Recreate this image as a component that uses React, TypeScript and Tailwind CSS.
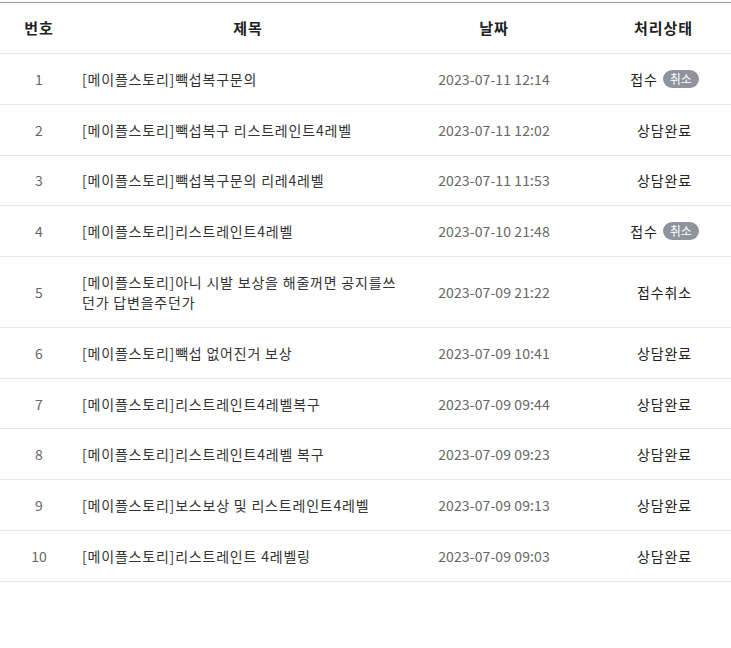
const rows = [
  { no: 1, title: "[메이플스토리]빽섭복구문의", date: "2023-07-11 12:14", status: "접수", cancel: true },
  { no: 2, title: "[메이플스토리]빽섭복구 리스트레인트4레벨", date: "2023-07-11 12:02", status: "상담완료" },
  { no: 3, title: "[메이플스토리]빽섭복구문의 리레4레벨", date: "2023-07-11 11:53", status: "상담완료" },
  { no: 4, title: "[메이플스토리]리스트레인트4레벨", date: "2023-07-10 21:48", status: "접수", cancel: true },
  { no: 5, title: "[메이플스토리]아니 시발 보상을 해줄꺼면 공지를쓰던가 답변을주던가", date: "2023-07-09 21:22", status: "접수취소" },
  { no: 6, title: "[메이플스토리]빽섭 없어진거 보상", date: "2023-07-09 10:41", status: "상담완료" },
  { no: 7, title: "[메이플스토리]리스트레인트4레벨복구", date: "2023-07-09 09:44", status: "상담완료" },
  { no: 8, title: "[메이플스토리]리스트레인트4레벨 복구", date: "2023-07-09 09:23", status: "상담완료" },
  { no: 9, title: "[메이플스토리]보스보상 및 리스트레인트4레벨", date: "2023-07-09 09:13", status: "상담완료" },
  { no: 10, title: "[메이플스토리]리스트레인트 4레벨링", date: "2023-07-09 09:03", status: "상담완료" },
];

export default function App() {
  return (
    <div className="min-h-[648px] bg-white pt-[2px] font-['Noto_Sans_CJK_KR',sans-serif] text-[14px]">
      <div className="border-t border-[#8f96a3]">
        <div className="flex h-[51px] items-center border-b border-[#e8e8e8] text-[15px] font-bold tracking-[1px] text-[#222]">
          <div className="w-[78px] text-center">번호</div>
          <div className="w-[340px] text-center">제목</div>
          <div className="w-[152px] text-center">날짜</div>
          <div className="flex-1 pl-[26px] text-center">처리상태</div>
        </div>
        {rows.map((r) => (
          <div
            key={r.no}
            className="flex items-center border-b border-[#e8e8e8] py-[14.9px] leading-[20px]"
          >
            <div className="w-[78px] text-center text-[#666]">{r.no}</div>
            <div className="w-[340px] pl-1 pr-[12px] tracking-[0.8px] text-[#333]">{r.title}</div>
            <div className="w-[152px] text-center tracking-[0.1px] text-[#666]">{r.date}</div>
            <div className="flex flex-1 items-center justify-center gap-[5px] pl-[28px] tracking-[0.9px] text-[#222]">
              <span>{r.status}</span>
              {r.cancel && (
                <span className="rounded-full bg-[#8e939e] px-[7px] text-[12px] leading-[18px] tracking-normal text-white">
                  취소
                </span>
              )}
            </div>
          </div>
        ))}
      </div>
    </div>
  );
}
